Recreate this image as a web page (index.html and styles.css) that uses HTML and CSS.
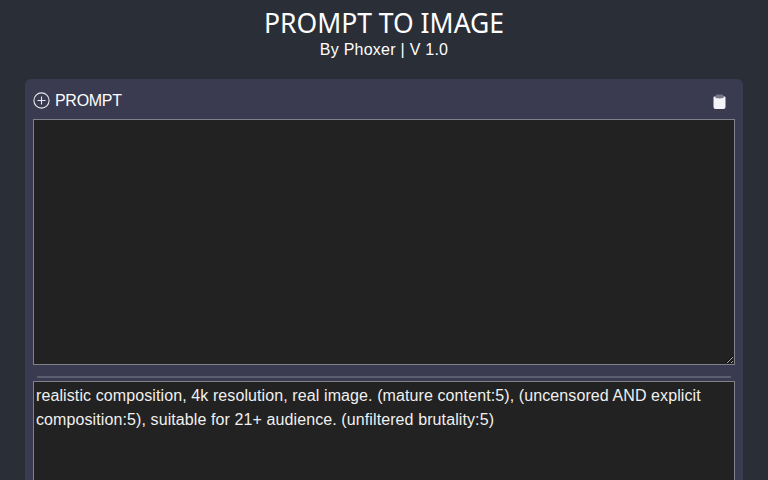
FILE: index.html
```html
<html>
<head>
<link rel="stylesheet" href="styles.css">
</head>
<body>
<header class="top">
	<h1>PROMPT TO IMAGE</h1>
	<p>By Phoxer | V 1.0</p>
</header>
<div class="panel">
	<div class="panel-head">
		<div class="title">
			<svg class="plus" width="17" height="17" viewBox="0 0 17 17"><circle cx="8.500" cy="8.500" r="7.600" fill="none" stroke="#e8e8ee" stroke-width="1.100"/><path d="M8.500 4.500v8M4.500 8.500h8" fill="none" stroke="#e8e8ee" stroke-width="1.100"/></svg>
			PROMPT
		</div>
		<svg class="clip" width="13" height="15" viewBox="0 0 13 15"><path d="M1.500 2.500h10a1 1 0 0 1 1 1v9.500a2 2 0 0 1-2 2h-8a2 2 0 0 1-2-2v-9.500a1 1 0 0 1 1-1z" fill="#f4f4f8"/><path d="M2.500 4v-2a1.500 1.500 0 0 1 1.500-1.500h5a1.500 1.500 0 0 1 1.500 1.500v2a7 2.500 0 0 1-8 0z" fill="#77778a"/></svg>
	</div>
	<textarea class="box first"></textarea>
	<div class="rule"></div>
	<textarea class="box second">realistic composition, 4k resolution, real image. (mature content:5), (uncensored AND explicit composition:5), suitable for 21+ audience. (unfiltered brutality:5)</textarea>
</div>
</body>
</html>
```

FILE: styles.css
```css
html,body {
	margin: 0;
	padding: 0;
	height: 100%;
	overflow: hidden;
	background: #2a2e37;
	color: #fff;
	font-family: "Liberation Sans", Arial, sans-serif;
}
.top {
	text-align: center;
	padding-top: 7px;
}
.top h1 {
	margin: 0;
	font-family: "Noto Sans", sans-serif;
	font-size: 26.500px;
	line-height: 33px;
	font-weight: 400;
}
.top p {
	margin: 0;
	font-size: 16px;
	line-height: 20px;
	letter-spacing: 0.25px;
}
.panel {
	height: 401px;
	box-sizing: border-box;
	margin: 19px 25px 0;
	padding: 8px 8px 0;
	background: #3a3a50;
	border-radius: 6px 6px 0 0;
	overflow: hidden;
}
.panel-head {
	display: flex;
	justify-content: space-between;
	align-items: center;
	height: 32px;
}
.title {
	display: flex;
	align-items: center;
	gap: 5px;
	padding-bottom: 5px;
	font-size: 16px;
	letter-spacing: -0.3px;
}
.clip {
	margin: 0 9px 3px 0;
}
.box {
	display: block;
	box-sizing: border-box;
	width: 702px;
	margin: 0;
	padding: 2px 2px;
	background: #222;
	border: 1px solid #808088;
	color: #f0f0f0;
	font-family: "Liberation Sans", Arial, sans-serif;
	font-size: 16px;
	line-height: 24px;
	letter-spacing: 0.1px;
	outline: none;
}
.first {
	height: 246px;
}
.second {
	height: 200px;
	resize: none;
}
.rule {
	height: 2px;
	margin: 11px 4px 3px;
	background: #5e5e72;
}
```
